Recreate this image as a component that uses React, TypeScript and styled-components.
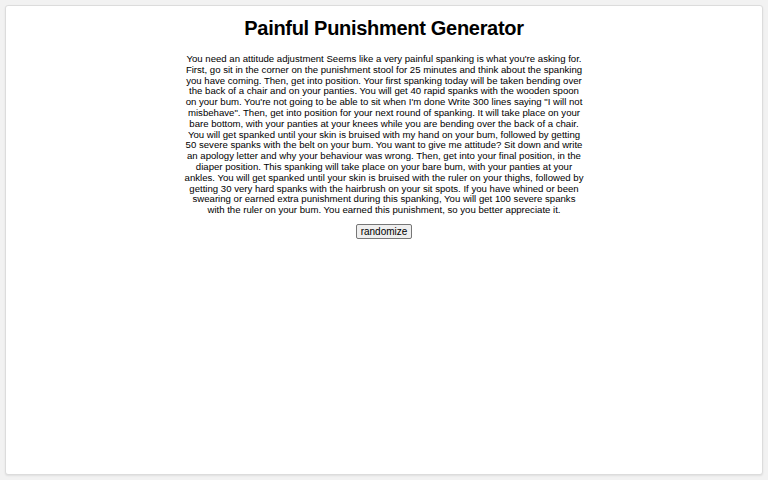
import React, { useState } from 'react';
import styled, { createGlobalStyle } from 'styled-components';

const GlobalStyle = createGlobalStyle`
  html, body {
    margin: 0;
    padding: 0;
    height: 100%;
    background: #f2f2f2;
  }
  #root {
    height: 100%;
  }
`;

const Page = styled.div`
  box-sizing: border-box;
  height: 100%;
  padding: 5px;
  font-family: "Liberation Sans", Arial, sans-serif;
  color: #000;
`;

const Card = styled.main`
  box-sizing: border-box;
  height: 100%;
  background: #fff;
  border: 1px solid #dcdcdc;
  border-radius: 3px;
  box-shadow: 0 1px 2px rgba(0, 0, 0, 0.08);
  display: flex;
  flex-direction: column;
  align-items: center;
  padding-top: 11px;
`;

const Title = styled.h1`
  margin: 0 0 14px;
  font-size: 20px;
  font-weight: bold;
  letter-spacing: -0.3px;
`;

const Story = styled.p`
  margin: 0 0 8px;
  width: 402px;
  font-size: 9.6px;
  line-height: 10.8px;
  text-align: center;
`;

const Button = styled.button`
  font-family: "Liberation Sans", Arial, sans-serif;
  font-size: 10px;
  padding: 1px 4px;
  background: #efefef;
  border: 1px solid #767676;
  border-radius: 2px;
  color: #000;
  cursor: pointer;
`;

const punishment =
  "You need an attitude adjustment Seems like a very painful spanking is what you're asking for. First, go sit in the corner on the punishment stool for 25 minutes and think about the spanking you have coming. Then, get into position. Your first spanking today will be taken bending over the back of a chair and on your panties. You will get 40 rapid spanks with the wooden spoon on your bum. You're not going to be able to sit when I'm done Write 300 lines saying \"I will not misbehave\". Then, get into position for your next round of spanking. It will take place on your bare bottom, with your panties at your knees while you are bending over the back of a chair. You will get spanked until your skin is bruised with my hand on your bum, followed by getting 50 severe spanks with the belt on your bum. You want to give me attitude? Sit down and write an apology letter and why your behaviour was wrong. Then, get into your final position, in the diaper position. This spanking will take place on your bare bum, with your panties at your ankles. You will get spanked until your skin is bruised with the ruler on your thighs, followed by getting 30 very hard spanks with the hairbrush on your sit spots. If you have whined or been swearing or earned extra punishment during this spanking, You will get 100 severe spanks with the ruler on your bum. You earned this punishment, so you better appreciate it.";

const App: React.FC = () => {
  const [text] = useState(punishment);

  return (
    <>
      <GlobalStyle />
      <Page>
        <Card>
          <Title>Painful Punishment Generator</Title>
          <Story>{text}</Story>
          <Button>randomize</Button>
        </Card>
      </Page>
    </>
  );
};

export default App;
